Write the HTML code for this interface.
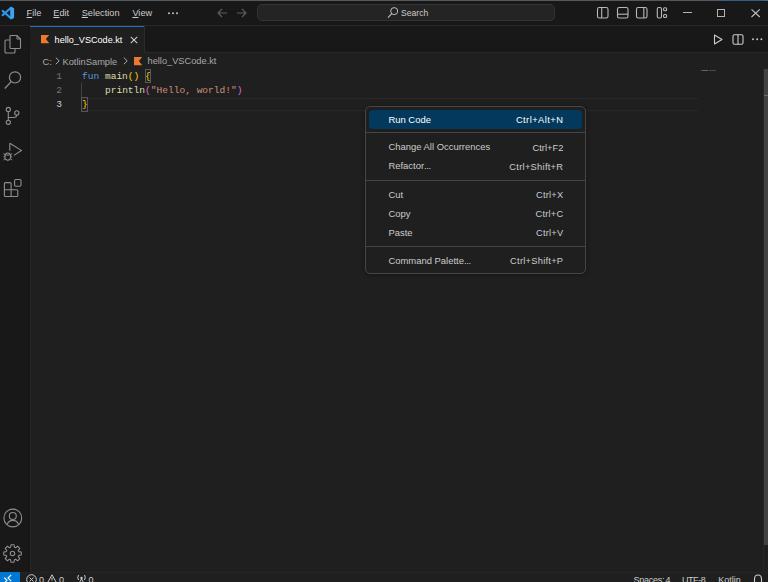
<!DOCTYPE html>
<html><head><meta charset="utf-8">
<style>
*{margin:0;padding:0;box-sizing:border-box;}
html,body{width:768px;height:582px;overflow:hidden;background:#1f1f1f;font-family:"Liberation Sans",sans-serif;color:#cccccc;position:relative;}
svg{overflow:visible;}
</style></head><body>
<div style="position:absolute;left:0px;top:0px;width:768px;height:1px;background:linear-gradient(90deg,#515a62 0%,#515a62 93.3%,#2f5f88 95%,#2f5f88 98.8%,#4a6a86 100%);"></div>
<div style="position:absolute;left:0px;top:1px;width:768px;height:24px;background:#181818;"></div>
<div style="position:absolute;left:0px;top:25px;width:768px;height:1px;background:#262626;"></div>
<svg style="position:absolute;left:0px;top:4px;" width="18" height="18" viewBox="0 0 18 18"><path d="M2.6 6.9 L11 14.3 M2.6 11.1 L11 3.7" stroke="#2a98ea" stroke-width="2.1" stroke-linecap="round"/><path d="M10.2 3.3 Q11 2.7 11.9 3.1 L13.6 3.9 Q14.1 4.2 14.1 4.8 V13.3 Q14.1 13.9 13.6 14.2 L11.9 15.1 Q11 15.5 10.2 14.9 Z" fill="#3aa7f3"/></svg>
<div style="position:absolute;left:26.6px;top:8.27px;font-family:'Liberation Sans',sans-serif;font-size:9.2px;line-height:10.276px;color:#cccccc;white-space:pre;"><span style="text-decoration:underline;text-underline-offset:0.5px">F</span>ile</div>
<div style="position:absolute;left:53.3px;top:8.27px;font-family:'Liberation Sans',sans-serif;font-size:9.2px;line-height:10.276px;color:#cccccc;white-space:pre;"><span style="text-decoration:underline;text-underline-offset:0.5px">E</span>dit</div>
<div style="position:absolute;left:81.7px;top:8.27px;font-family:'Liberation Sans',sans-serif;font-size:9.2px;line-height:10.276px;color:#cccccc;white-space:pre;"><span style="text-decoration:underline;text-underline-offset:0.5px">S</span>election</div>
<div style="position:absolute;left:132.4px;top:8.27px;font-family:'Liberation Sans',sans-serif;font-size:9.2px;line-height:10.276px;color:#cccccc;white-space:pre;"><span style="text-decoration:underline;text-underline-offset:0.5px">V</span>iew</div>
<svg style="position:absolute;left:166px;top:11px;" width="14" height="4" viewBox="0 0 14 4"><circle cx="3.0" cy="2.2" r="0.95" fill="#cccccc"/><circle cx="7.0" cy="2.2" r="0.95" fill="#cccccc"/><circle cx="11.0" cy="2.2" r="0.95" fill="#cccccc"/></svg>
<svg style="position:absolute;left:216px;top:8px;" width="32" height="10" viewBox="0 0 32 10"><path d="M6 1 L2 5 L6 9 M2 5 H11" stroke="#5f5f5f" stroke-width="1.1" fill="none"/><path d="M26 1 L30 5 L26 9 M30 5 H21" stroke="#5f5f5f" stroke-width="1.1" fill="none"/></svg>
<div style="position:absolute;left:257px;top:4px;width:298px;height:17px;background:#242424;border:1px solid #333333;border-radius:5px;box-sizing:border-box"></div>
<svg style="position:absolute;left:386.5px;top:5.5px;" width="12" height="13" viewBox="0 0 12 13"><circle cx="7.2" cy="5.1" r="3.5" stroke="#c0c0c0" stroke-width="1" fill="none"/><path d="M4.7 7.6 L1 11.6" stroke="#c0c0c0" stroke-width="1.1"/></svg>
<div style="position:absolute;left:401px;top:8.82px;font-family:'Liberation Sans',sans-serif;font-size:8.6px;line-height:9.606px;color:#cccccc;white-space:pre;">Search</div>
<svg style="position:absolute;left:596px;top:6px;" width="74" height="14" viewBox="0 0 74 14"><rect x="1.5" y="1.5" width="10.5" height="10.5" rx="1.8" stroke="#b8b8b8" stroke-width="1.1" fill="none"/><path d="M5.7 1.5 V12" stroke="#b8b8b8" stroke-width="1.1"/><rect x="21.5" y="1.5" width="10.5" height="10.5" rx="1.8" stroke="#b8b8b8" stroke-width="1.1" fill="none"/><path d="M21.5 8.2 H32" stroke="#b8b8b8" stroke-width="1.1"/><rect x="40.5" y="1.5" width="10.5" height="10.5" rx="1.8" stroke="#b8b8b8" stroke-width="1.1" fill="none"/><path d="M47.8 1.5 V12" stroke="#b8b8b8" stroke-width="1.1"/><rect x="61.3" y="1.5" width="4.2" height="10.5" rx="1.5" stroke="#b8b8b8" stroke-width="1.1" fill="none"/><rect x="67.6" y="1.8" width="3" height="3" rx="1" stroke="#b8b8b8" stroke-width="1.1" fill="none"/><rect x="67.6" y="8.5" width="3" height="3" rx="1" stroke="#b8b8b8" stroke-width="1.1" fill="none"/></svg>
<div style="position:absolute;left:683px;top:12px;width:8.5px;height:1px;background:#b4b4b4;"></div>
<svg style="position:absolute;left:716px;top:8px;" width="10" height="10" viewBox="0 0 10 10"><rect x="1.5" y="1.5" width="7" height="7" stroke="#b4b4b4" stroke-width="1" fill="none"/></svg>
<svg style="position:absolute;left:750px;top:8px;" width="11" height="10" viewBox="0 0 11 10"><path d="M1.5 1.3 L9.8 9 M9.8 1.3 L1.5 9" stroke="#c4c4c4" stroke-width="1.05"/></svg>
<div style="position:absolute;left:0px;top:26px;width:30px;height:546px;background:#181818;"></div>
<div style="position:absolute;left:28px;top:26px;width:1px;height:546px;background:#151515;"></div>
<div style="position:absolute;left:30px;top:27px;width:1px;height:545px;background:#262626;"></div>
<svg style="position:absolute;left:3px;top:34px;" width="20" height="21" viewBox="0 0 20 21"><path d="M6.5 6 H3 Q2 6 2 7 V18 Q2 19 3 19 H11 Q12 19 12 18 V15" stroke="#8e8e8e" stroke-width="1.1" fill="none"/><path d="M7 2 Q7 1.5 7.5 1.5 H14 L17.5 5 V13.5 Q17.5 14.5 16.5 14.5 H8 Q7 14.5 7 13.5 Z" stroke="#8e8e8e" stroke-width="1.1" fill="none"/><path d="M14 1.5 V5 H17.5" stroke="#8e8e8e" stroke-width="1" fill="none"/></svg>
<svg style="position:absolute;left:3px;top:69px;" width="18" height="22" viewBox="0 0 18 22"><circle cx="12" cy="8.4" r="5.6" stroke="#8e8e8e" stroke-width="1.2" fill="none"/><path d="M8.2 12.6 L1.8 19.5" stroke="#8e8e8e" stroke-width="1.3"/></svg>
<svg style="position:absolute;left:4px;top:105px;" width="16" height="21" viewBox="0 0 16 21"><circle cx="4.3" cy="4.5" r="2.1" stroke="#8e8e8e" stroke-width="1.1" fill="none"/><circle cx="4.3" cy="17.3" r="2.1" stroke="#8e8e8e" stroke-width="1.1" fill="none"/><circle cx="12.8" cy="7.9" r="2.1" stroke="#8e8e8e" stroke-width="1.1" fill="none"/><path d="M4.3 6.6 V15.2 M12.8 10 Q12.8 12.5 9.5 12.5 H4.5" stroke="#8e8e8e" stroke-width="1.1" fill="none"/></svg>
<svg style="position:absolute;left:2px;top:142px;" width="22" height="21" viewBox="0 0 22 21"><path d="M7.8 1.2 L19.4 8.4 L11.9 13.4" stroke="#8e8e8e" stroke-width="1.1" fill="none" stroke-linejoin="miter"/><path d="M7.8 1.2 V8.8" stroke="#8e8e8e" stroke-width="1.1"/><ellipse cx="5.8" cy="14.6" rx="2.9" ry="3.6" stroke="#8e8e8e" stroke-width="1.1" fill="none"/><path d="M1.4 11.6 L3 12.6 M1.4 14.8 H2.9 M1.4 18 L3 16.8 M10.2 11.6 L8.6 12.6 M10.2 14.8 H8.7 M10.2 18 L8.6 16.8 M3 13 H8.6" stroke="#8e8e8e" stroke-width="1"/></svg>
<svg style="position:absolute;left:2px;top:178px;" width="22" height="20" viewBox="0 0 22 20"><path d="M9.1 11.8 V5.6 Q9.1 4.6 8.1 4.6 H3.4 Q2.4 4.6 2.4 5.6 V17.5 Q2.4 18.5 3.4 18.5 H14.8 Q15.8 18.5 15.8 17.5 V12.8 Q15.8 11.8 14.8 11.8 H2.4 M9.1 11.8 V18.5" stroke="#8e8e8e" stroke-width="1.1" fill="none"/><rect x="12.6" y="1.5" width="6.4" height="6.8" rx="1.2" stroke="#8e8e8e" stroke-width="1.1" fill="none"/></svg>
<svg style="position:absolute;left:3px;top:508px;" width="20" height="20" viewBox="0 0 20 20"><circle cx="9.8" cy="10" r="8.9" stroke="#8e8e8e" stroke-width="1.1" fill="none"/><circle cx="9.8" cy="8" r="3.5" stroke="#8e8e8e" stroke-width="1.1" fill="none"/><path d="M4.2 16.2 Q5.8 12.4 9.8 12.4 Q13.8 12.4 15.4 16.2" stroke="#8e8e8e" stroke-width="1.1" fill="none"/></svg>
<svg style="position:absolute;left:3px;top:543.9px;" width="19" height="19" viewBox="0 0 19 19"><path d="M15.72 7.60 L18.26 7.95 L18.26 11.05 L15.72 11.40 L15.24 12.55 L16.79 14.60 L14.60 16.79 L12.55 15.24 L11.40 15.72 L11.05 18.26 L7.95 18.26 L7.60 15.72 L6.45 15.24 L4.40 16.79 L2.21 14.60 L3.76 12.55 L3.28 11.40 L0.74 11.05 L0.74 7.95 L3.28 7.60 L3.76 6.45 L2.21 4.40 L4.40 2.21 L6.45 3.76 L7.60 3.28 L7.95 0.74 L11.05 0.74 L11.40 3.28 L12.55 3.76 L14.60 2.21 L16.79 4.40 L15.24 6.45 Z" stroke="#8e8e8e" stroke-width="1.1" fill="none" stroke-linejoin="round"/><circle cx="9.5" cy="9.5" r="2.2" stroke="#8e8e8e" stroke-width="1.1" fill="none"/></svg>
<div style="position:absolute;left:30px;top:26px;width:738px;height:26px;background:#181818;"></div>
<div style="position:absolute;left:30px;top:52px;width:738px;height:1px;background:#272727;"></div>
<div style="position:absolute;left:30px;top:26px;width:114px;height:27px;background:#1f1f1f;"></div>
<div style="position:absolute;left:30px;top:26px;width:114px;height:1px;background:#1f73bd;"></div>
<div style="position:absolute;left:144px;top:26px;width:1px;height:26px;background:#2b2b2b;"></div>
<svg style="position:absolute;left:41.1px;top:35px;" width="9" height="9" viewBox="0 0 9 9"><path d="M0 0 H8.2 L4.9 4.1 L8.2 8.2 H0 Z" fill="#eb7a2e"/></svg>
<div style="position:absolute;left:54.6px;top:34.76px;font-family:'Liberation Sans',sans-serif;font-size:9.1px;line-height:10.165px;color:#ffffff;white-space:pre;">hello_VSCode.kt</div>
<svg style="position:absolute;left:130px;top:35.5px;" width="8" height="8" viewBox="0 0 8 8"><path d="M0.8 0.8 L7.2 7.2 M7.2 0.8 L0.8 7.2" stroke="#cccccc" stroke-width="1.1"/></svg>
<svg style="position:absolute;left:713px;top:34px;" width="10" height="11" viewBox="0 0 10 11"><path d="M1.5 1 L9 5.5 L1.5 10 Z" stroke="#cccccc" stroke-width="1.1" fill="none" stroke-linejoin="round"/></svg>
<svg style="position:absolute;left:732px;top:34px;" width="12" height="11" viewBox="0 0 12 11"><rect x="1" y="0.8" width="10" height="9.5" rx="1.5" stroke="#cccccc" stroke-width="1.1" fill="none"/><path d="M6 0.8 V10.3" stroke="#cccccc" stroke-width="1.1"/></svg>
<svg style="position:absolute;left:750px;top:37px;" width="14" height="4" viewBox="0 0 14 4"><circle cx="3.0" cy="2.3" r="0.95" fill="#cccccc"/><circle cx="7.2" cy="2.3" r="0.95" fill="#cccccc"/><circle cx="11.4" cy="2.3" r="0.95" fill="#cccccc"/></svg>
<div style="position:absolute;left:42.6px;top:56.58px;font-family:'Liberation Sans',sans-serif;font-size:9.3px;line-height:10.388px;color:#a9a9a9;white-space:pre;">C:</div>
<svg style="position:absolute;left:54.5px;top:57px;" width="5" height="9" viewBox="0 0 5 9"><path d="M0.8 0.6 L4.2 3.9 L0.8 7.2" stroke="#a9a9a9" stroke-width="1" fill="none"/></svg>
<div style="position:absolute;left:62.5px;top:56.58px;font-family:'Liberation Sans',sans-serif;font-size:9.3px;line-height:10.388px;color:#a9a9a9;white-space:pre;">KotlinSample</div>
<svg style="position:absolute;left:122.8px;top:57px;" width="5" height="9" viewBox="0 0 5 9"><path d="M0.8 0.6 L4.2 3.9 L0.8 7.2" stroke="#a9a9a9" stroke-width="1" fill="none"/></svg>
<svg style="position:absolute;left:134px;top:57px;" width="9" height="9" viewBox="0 0 9 9"><path d="M0 0 H8.2 L4.9 4.1 L8.2 8.2 H0 Z" fill="#eb7a2e"/></svg>
<div style="position:absolute;left:147.5px;top:56.23px;font-family:'Liberation Sans',sans-serif;font-size:9.25px;line-height:10.332px;color:#a9a9a9;white-space:pre;">hello_VSCode.kt</div>
<div style="position:absolute;left:81px;top:98px;width:617px;height:13px;background:transparent;border:1px solid #282828;border-right:none;box-sizing:border-box"></div>
<div style="position:absolute;left:81px;top:83px;width:1px;height:14px;background:#404040;"></div>
<div style="position:absolute;right:706px;top:71.54px;font-family:'Liberation Mono',monospace;font-size:9.566666666666668px;line-height:10.837px;color:#6e7681;white-space:pre;">1</div>
<div style="position:absolute;right:706px;top:85.54px;font-family:'Liberation Mono',monospace;font-size:9.566666666666668px;line-height:10.837px;color:#6e7681;white-space:pre;">2</div>
<div style="position:absolute;right:706px;top:99.54px;font-family:'Liberation Mono',monospace;font-size:9.566666666666668px;line-height:10.837px;color:#cccccc;white-space:pre;">3</div>
<div style="position:absolute;left:82.0px;top:71.54px;font-family:'Liberation Mono',monospace;font-size:9.566666666666668px;line-height:10.837px;color:#cccccc;white-space:pre;"><span style="color:#569cd6">fun</span> <span style="color:#dcdcaa">main</span><span style="color:#ffd700">()</span> <span style="color:#ffd700">{</span></div>
<div style="position:absolute;left:104.96000000000001px;top:85.54px;font-family:'Liberation Mono',monospace;font-size:9.566666666666668px;line-height:10.837px;color:#cccccc;white-space:pre;"><span style="color:#dcdcaa">println</span><span style="color:#da70d6">(</span><span style="color:#ce9178">"Hello, world!"</span><span style="color:#da70d6">)</span></div>
<div style="position:absolute;left:81px;top:97px;width:7px;height:15px;background:transparent;border:1px solid #555555;box-sizing:border-box"></div>
<div style="position:absolute;left:144.5px;top:69px;width:6.5px;height:14px;background:transparent;border:1px solid #5a5a5a;box-sizing:border-box"></div>
<div style="position:absolute;left:82.0px;top:99.54px;font-family:'Liberation Mono',monospace;font-size:9.566666666666668px;line-height:10.837px;color:#cccccc;white-space:pre;"><span style="color:#ffd700">}</span></div>
<div style="position:absolute;left:701px;top:70px;width:2px;height:1px;background:#3b5a78;"></div>
<div style="position:absolute;left:703px;top:70px;width:5px;height:1px;background:#6b6a5c;"></div>
<div style="position:absolute;left:709px;top:70px;width:7px;height:1px;background:#4a4a4a;"></div>
<div style="position:absolute;left:764px;top:69px;width:4px;height:476px;background:#424242;"></div>
<div style="position:absolute;left:763px;top:69px;width:1px;height:503px;background:#262626;"></div>
<div style="position:absolute;left:764px;top:95px;width:4px;height:1px;background:#6a6a6a;"></div>
<div style="position:absolute;left:365px;top:106px;width:221px;height:168px;background:#1f1f1f;border:1px solid #454545;border-radius:5px;box-sizing:border-box;box-shadow:0 1px 4px rgba(0,0,0,0.3)"></div>
<div style="position:absolute;left:369px;top:110px;width:213px;height:19px;background:#04395e;border-radius:4px"></div>
<div style="position:absolute;left:388.4px;top:114.75px;font-family:'Liberation Sans',sans-serif;font-size:9.45px;line-height:10.556px;color:#ffffff;white-space:pre;">Run Code</div>
<div style="position:absolute;right:204.70000000000005px;top:114.88px;font-family:'Liberation Sans',sans-serif;font-size:9.3px;line-height:10.388px;color:#ffffff;white-space:pre;letter-spacing:0.45px">Ctrl+Alt+N</div>
<div style="position:absolute;left:366px;top:132px;width:219px;height:1px;background:#454545;"></div>
<div style="position:absolute;left:388.4px;top:142.45px;font-family:'Liberation Sans',sans-serif;font-size:9.45px;line-height:10.556px;color:#cccccc;white-space:pre;">Change All Occurrences</div>
<div style="position:absolute;right:204.70000000000005px;top:142.58px;font-family:'Liberation Sans',sans-serif;font-size:9.3px;line-height:10.388px;color:#cccccc;white-space:pre;letter-spacing:0px">Ctrl+F2</div>
<div style="position:absolute;left:388.4px;top:161.45px;font-family:'Liberation Sans',sans-serif;font-size:9.45px;line-height:10.556px;color:#cccccc;white-space:pre;">Refactor<span style="letter-spacing:-0.35px">...</span></div>
<div style="position:absolute;right:204.70000000000005px;top:161.58px;font-family:'Liberation Sans',sans-serif;font-size:9.3px;line-height:10.388px;color:#cccccc;white-space:pre;letter-spacing:0.28px">Ctrl+Shift+R</div>
<div style="position:absolute;left:366px;top:179.5px;width:219px;height:1px;background:#454545;"></div>
<div style="position:absolute;left:388.4px;top:189.85px;font-family:'Liberation Sans',sans-serif;font-size:9.45px;line-height:10.556px;color:#cccccc;white-space:pre;">Cut</div>
<div style="position:absolute;right:204.70000000000005px;top:189.98px;font-family:'Liberation Sans',sans-serif;font-size:9.3px;line-height:10.388px;color:#cccccc;white-space:pre;letter-spacing:0.2px">Ctrl+X</div>
<div style="position:absolute;left:388.4px;top:208.75px;font-family:'Liberation Sans',sans-serif;font-size:9.45px;line-height:10.556px;color:#cccccc;white-space:pre;">Copy</div>
<div style="position:absolute;right:204.70000000000005px;top:208.88px;font-family:'Liberation Sans',sans-serif;font-size:9.3px;line-height:10.388px;color:#cccccc;white-space:pre;letter-spacing:0.2px">Ctrl+C</div>
<div style="position:absolute;left:388.4px;top:227.95px;font-family:'Liberation Sans',sans-serif;font-size:9.45px;line-height:10.556px;color:#cccccc;white-space:pre;">Paste</div>
<div style="position:absolute;right:204.70000000000005px;top:228.08px;font-family:'Liberation Sans',sans-serif;font-size:9.3px;line-height:10.388px;color:#cccccc;white-space:pre;letter-spacing:0.2px">Ctrl+V</div>
<div style="position:absolute;left:366px;top:246px;width:219px;height:1px;background:#454545;"></div>
<div style="position:absolute;left:388.4px;top:255.95px;font-family:'Liberation Sans',sans-serif;font-size:9.45px;line-height:10.556px;color:#cccccc;white-space:pre;">Command Palette<span style="letter-spacing:-0.35px">...</span></div>
<div style="position:absolute;right:204.70000000000005px;top:256.08px;font-family:'Liberation Sans',sans-serif;font-size:9.3px;line-height:10.388px;color:#cccccc;white-space:pre;letter-spacing:0.26px">Ctrl+Shift+P</div>
<div style="position:absolute;left:0px;top:572px;width:768px;height:10px;background:#1f1f1f;"></div>
<div style="position:absolute;left:0px;top:572px;width:768px;height:1px;background:#242424;"></div>
<div style="position:absolute;left:0px;top:572px;width:20px;height:10px;background:#0078d4;"></div>
<svg style="position:absolute;left:3px;top:574px;" width="10" height="8" viewBox="0 0 10 8"><path d="M8.2 0.8 L5 4 L8.2 7.2 M1.3 3.6 L4 6.3 L1.3 9" stroke="#ffffff" stroke-width="1.1" fill="none"/></svg>
<svg style="position:absolute;left:25.7px;top:574px;" width="12" height="8" viewBox="0 0 12 8"><circle cx="5.5" cy="5.5" r="4.8" stroke="#cccccc" stroke-width="1" fill="none"/><path d="M3.5 3.5 L7.5 7.5 M7.5 3.5 L3.5 7.5" stroke="#cccccc" stroke-width="1"/></svg>
<div style="position:absolute;left:39px;top:574.86px;font-family:'Liberation Sans',sans-serif;font-size:9px;line-height:10.053px;color:#cccccc;white-space:pre;">0</div>
<svg style="position:absolute;left:47px;top:574px;" width="10" height="8" viewBox="0 0 10 8"><path d="M5 0.8 L9.3 8.5 H0.7 Z M5 3.5 V6.5" stroke="#cccccc" stroke-width="1" fill="none"/></svg>
<div style="position:absolute;left:59px;top:574.86px;font-family:'Liberation Sans',sans-serif;font-size:9px;line-height:10.053px;color:#cccccc;white-space:pre;">0</div>
<svg style="position:absolute;left:76px;top:574px;" width="11" height="8" viewBox="0 0 11 8"><circle cx="5.5" cy="4" r="1.2" fill="#cccccc"/><path d="M2.5 1 Q1 3.5 2.5 6 M8.5 1 Q10 3.5 8.5 6 M5.5 5 L3.8 8 M5.5 5 L7.2 8" stroke="#cccccc" stroke-width="1" fill="none"/></svg>
<div style="position:absolute;left:88.5px;top:574.86px;font-family:'Liberation Sans',sans-serif;font-size:9px;line-height:10.053px;color:#cccccc;white-space:pre;">0</div>
<div style="position:absolute;left:633.5px;top:574.86px;font-family:'Liberation Sans',sans-serif;font-size:9px;line-height:10.053px;color:#cccccc;white-space:pre;letter-spacing:-0.25px;word-spacing:-0.9px">Spaces: 4</div>
<div style="position:absolute;left:682px;top:574.86px;font-family:'Liberation Sans',sans-serif;font-size:9px;line-height:10.053px;color:#cccccc;white-space:pre;letter-spacing:-0.45px">UTF-8</div>
<div style="position:absolute;left:718.3px;top:574.86px;font-family:'Liberation Sans',sans-serif;font-size:9px;line-height:10.053px;color:#cccccc;white-space:pre;">Kotlin</div>
<svg style="position:absolute;left:753px;top:574px;" width="10" height="8" viewBox="0 0 10 8"><path d="M1.5 8 V5 Q1.5 1 5 1 Q8.5 1 8.5 5 V8" stroke="#cccccc" stroke-width="1.1" fill="none"/></svg>
</body></html>
